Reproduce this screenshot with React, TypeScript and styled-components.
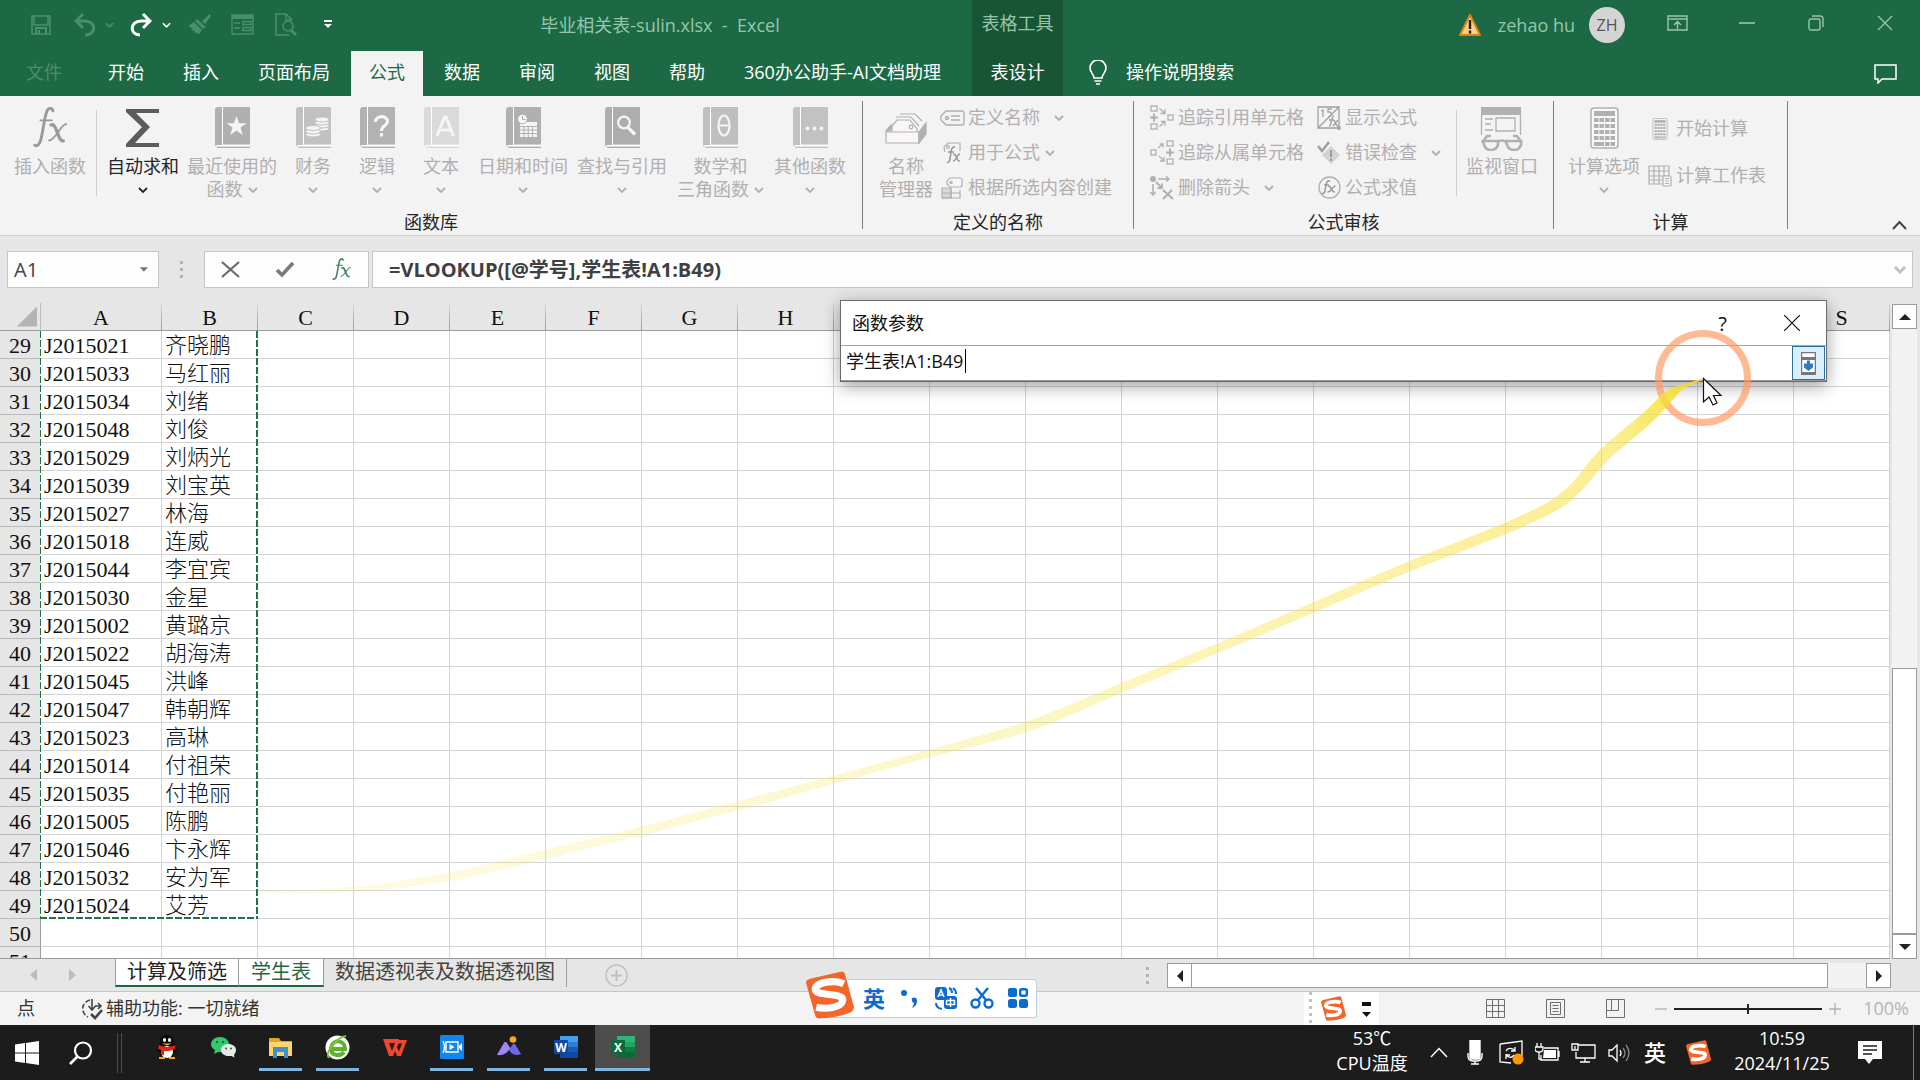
import React from 'react';
import styled, { createGlobalStyle, css } from 'styled-components';

const UI = '"Open Sans", "Noto Sans CJK SC", sans-serif';
const SONG = '"Liberation Serif", "Noto Sans CJK SC", serif';
const GREEN = '#1d6945';
const DIM = '#b1afaf';

const Global = createGlobalStyle`
  * { box-sizing: border-box; }
  body { margin: 0; background: #e6e6e6; font-family: ${UI}; font-size: 18px; line-height: 23px; color: #262626; overflow: hidden; }
  button, input { font: inherit; color: inherit; background: none; border: 0; padding: 0; margin: 0; outline: 0; border-radius: 0; }
  svg { display: block; flex: none; }
`;

const App_ = styled.div`
  position: relative; display: flex; flex-direction: column; height: 100vh; overflow: hidden;
`;

/* ---------- title bar ---------- */
const TitleBar = styled.header`
  display: flex; height: 51px; background: ${GREEN}; color: #96c6aa; flex: none;
`;
const TitleLeft = styled.div`display: flex; flex: 0 0 972px;`;
const QuickBar = styled.div`display: flex; align-items: center; padding: 0 0 2px 21px; flex: 0 0 348px;`;
const QuickBtn = styled.button<{ $w: number; $gap?: number; $on?: boolean }>`
  display: flex; align-items: center; justify-content: center; width: ${p => p.$w}px; height: 40px; flex: none;
  margin-left: ${p => p.$gap || 0}px; color: ${p => (p.$on ? '#fff' : '#4b8e6a')};
`;
const DocTitle = styled.h1`
  flex: 1; margin: 0; font-size: 18px; font-weight: 400; line-height: 51px; text-align: center; white-space: pre;
`;
const ContextName = styled.div`
  width: 91px; background: #185537; text-align: center; line-height: 47px;
`;
const Account = styled.div`
  display: flex; align-items: center; margin-left: auto; gap: 16px; height: 50px;
`;
const Avatar = styled.span`
  width: 36px; height: 36px; border-radius: 50%; background: #d4d4d4; color: #555; font-size: 16px; line-height: 36px; text-align: center;
  margin-left: -2px;
`;
const WinButtons = styled.div`display: flex; margin-left: 18px; padding-right: 1px;`;
const WinBtn = styled.button`
  width: 69px; height: 46px; display: flex; align-items: center; justify-content: center;
`;

const TabBar = styled.nav`
  display: flex; height: 45px; background: ${GREEN}; color: #fff; flex: none; align-items: stretch;
`;
const TabGroup = styled.div`display: flex; gap: 3px; flex: 0 0 972px;`;
const Tab = styled.button<{ $active?: boolean; $file?: boolean; $context?: boolean }>`
  display: flex; justify-content: center; padding: 0 18px; line-height: 42px; white-space: nowrap; flex: none;
  ${p => p.$active && css`background: #f3f3f3; color: ${GREEN};`}
  ${p => p.$file && css`width: 87px; padding: 0 0 0 26px; justify-content: flex-start; color: #4b8e6a;`}
  ${p => p.$context && css`width: 91px; background: #185537;`}
`;
const TellMe = styled.button`
  display: flex; align-items: center; gap: 18px; margin-left: 25px; height: 43px;
`;
const CommentBtn = styled.button`margin: 0 23px 0 auto;`;

/* ---------- ribbon ---------- */
const Ribbon = styled.section`
  display: flex; height: 140px; background: #f3f3f3; border-bottom: 1px solid #cfcfcf; flex: none;
`;
const Group = styled.div<{ $w: number }>`
  display: flex; flex-direction: column; flex: 0 0 ${p => p.$w}px; position: relative;
`;
const GroupBody = styled.div<{ $pad: number; $gap?: number }>`
  display: flex; height: 114px; padding-left: ${p => p.$pad}px; gap: ${p => p.$gap || 0}px; align-items: flex-start;
`;
const GroupName = styled.div`text-align: center; line-height: 24px; color: #262626;`;
const Divider = styled.div`width: 1px; margin: 5px 0 6px; background: #7d7d7d; flex: none;`;
const InnerDivider = styled.div<{ $gap?: number }>`
  width: 1px; height: 86px; margin: 14px ${p => p.$gap || 0}px 0; background: #cfcfcf;
`;
const BigBtn = styled.button<{ $on?: boolean; $pad?: number }>`
  display: flex; flex-direction: column; align-items: center; min-width: 64px; padding: 11px ${p => p.$pad || 4}px 0;
  color: ${p => (p.$on ? '#262626' : DIM)}; white-space: nowrap; flex: none;
`;
const BigIcon = styled.span`display: flex; height: 42px; margin-bottom: 6px; justify-content: center;`;
const Line = styled.span`display: flex; align-items: center; height: 23px; gap: 5px;`;
const SmallCol = styled.div<{ $w: number; $top: number }>`
  display: flex; flex-direction: column; width: ${p => p.$w}px; padding-top: ${p => p.$top}px; flex: none;
`;
const SmallBtn = styled.button<{ $h: number; $gap?: number }>`
  display: flex; align-items: center; height: ${p => p.$h}px; color: ${DIM}; white-space: nowrap;
  & > span { margin: 0 ${p => p.$gap || 0}px 0 4px; }
`;
const SmallIcon = styled.i`display: flex; width: 24px; justify-content: center; flex: none;`;
const Collapse = styled.button`margin: auto 13px 5px auto; color: #444;`;

/* ---------- formula bar ---------- */
const FormulaBar = styled.section`
  display: flex; height: 67px; padding: 15px 7px 0; align-items: flex-start; background: #e6e6e6; flex: none;
`;
const NameBox = styled.label`
  display: flex; align-items: center; width: 152px; height: 37px; padding: 0 10px 0 6px; background: #fdfdfd; border: 1px solid #c6c6c6; color: #444;
  font-size: 20px;
  input { width: 100%; flex: 1; }
  svg { color: #777; }
`;
const Dots = styled.span`
  display: flex; flex-direction: column; gap: 4px;
  &::before, &::after { content: ''; }
  i, &::before, &::after { width: 3px; height: 3px; background: #b2b2b2; }
`;
const DotsSlot = styled.div`display: flex; width: 45px; height: 37px; align-items: center; justify-content: center;`;
const FormulaTools = styled.div`
  display: flex; width: 165px; height: 37px; background: #fdfdfd; border: 1px solid #c6c6c6; justify-content: center; gap: 35px; align-items: center; margin-right: 3px;
`;
const FormulaField = styled.label`
  display: flex; flex: 1; align-items: center; height: 37px; padding: 0 6px 0 16px; background: #fdfdfd; border: 1px solid #c6c6c6; color: #404040;
  input { flex: 1; font-size: 20px; font-weight: 700; }
`;

/* ---------- sheet ---------- */
const SheetArea = styled.main`display: flex; flex: 1; min-height: 0; background: #e6e6e6;`;
const GridView = styled.div`position: relative; flex: 1; overflow: hidden; border-bottom: 1px solid #9b9b9b;`;
const Grid = styled.table`
  width: 1890px; table-layout: fixed; border-collapse: separate; border-spacing: 0; background: #fff;
  font-family: ${SONG}; font-size: 22px; line-height: 24px; color: #111;
  th { font-weight: 400; background: #e6e6e6; padding: 3px 0 0; height: 28px; }
  thead th { border-bottom: 1px solid #9b9b9b; border-right: 1px solid; border-image: linear-gradient(#dadada, #9b9b9b) 1; }
  thead th:first-child { border-image: none; border-color: #9b9b9b; border-right-color: #bdbdbd; padding: 0; }
  tbody th { border-right: 1px solid #9b9b9b; border-bottom: 1px solid #b9b9b9; }
  td { padding: 3px 0 0 3px; height: 28px; border-right: 1px solid #d4d4d4; border-bottom: 1px solid #d4d4d4; white-space: nowrap; overflow: hidden; font-weight: 300; }
`;
const Corner = styled.span`
  display: block; width: 20px; height: 20px; margin: 3px 3px 3px auto; background: #b4b4b4; clip-path: polygon(100% 0, 100% 100%, 0 100%);
`;
const Ants = styled.div`
  position: absolute; left: 40px; top: 28px; width: 218px; height: 588px; pointer-events: none;
  background:
    repeating-linear-gradient(180deg, #217346 0 7px, #fff 7px 9px) 0 0 / 1px 100% no-repeat,
    repeating-linear-gradient(180deg, #217346 0 7px, #fff 7px 9px) 100% 0 / 2px 100% no-repeat,
    repeating-linear-gradient(90deg, #217346 0 7px, #fff 7px 9px) 0 100% / 100% 2px no-repeat;
`;
const VScroll = styled.div`
  display: flex; flex-direction: column; width: 30px; padding: 1px 3px 0 2px; flex: none;
`;
const VTrack = styled.div`display: flex; flex: 1; flex-direction: column; justify-content: flex-end; background: #f2f2f2;`;
const VThumb = styled.div`height: 44%; background: #fff; border: 1px solid #9b9b9b;`;
const ScrollBtn = styled.button`
  width: 25px; height: 25px; display: flex; align-items: center; justify-content: center; background: #fff; border: 1px solid #9b9b9b; color: #222; flex: none;
`;

const SheetBar = styled.section`
  display: flex; height: 33px; background: #e6e6e6; border-bottom: 1px solid #c6c6c6; flex: none; align-items: flex-start;
`;
const SheetNav = styled.div`display: flex; align-items: center; gap: 26px; height: 32px; width: 115px; padding-left: 28px; color: #bcbcbc;`;
const SheetTab = styled.button<{ $kind: 'near' | 'active' | 'plain' }>`
  font-size: 20px; line-height: 24px; height: 28px; padding: 0 11px 2px; white-space: nowrap; color: #444;
  ${p => p.$kind !== 'plain' && css`background: #fff; border-bottom: 2px solid ${GREEN}; border-right: 1px solid #9b9b9b; color: #222; padding-bottom: 0;`}
  ${p => p.$kind === 'near' && css`border-left: 1px solid #9b9b9b;`}
  ${p => p.$kind === 'active' && css`color: ${GREEN}; padding: 0 12px;`}
  ${p => p.$kind === 'plain' && css`border-right: 1px solid #9b9b9b;`}
`;
const AddSheet = styled.button`margin: 5px 0 0 38px; color: #c0c0c0;`;
const HScroll = styled.div`
  display: flex; align-items: center; flex: 0 0 774px; margin: 4px 0 0 auto;
`;
const HDots = styled.div`width: 21px; display: flex;`;
const HTrack = styled.div`flex: 1; height: 25px; background: #f2f2f2; margin-left: -1px;`;
const HThumb = styled.div`width: calc(100% - 38px); height: 25px; background: #fff; border: 1px solid #9b9b9b;`;
const HPad = styled.div`width: 29px;`;

/* ---------- status bar ---------- */
const StatusBar = styled.footer`
  display: flex; align-items: center; height: 33px; background: #f3f3f3; color: #333; padding: 0 11px 0 17px; flex: none;
`;
const Access = styled.button`display: flex; align-items: center; gap: 3px; margin-left: 47px;`;
const LangBar = styled.div`
  display: flex; align-items: center; width: 75px; height: 33px; margin-left: auto; background: #fff; padding-left: 5px; 
  svg + svg { margin-left: 16px; }
`;
const LangGrip = styled.span`width: 3px; height: 33px; margin-right: 9px; background: repeating-linear-gradient(#c2c2c2 0 3px, #fff 3px 7px);`;
const Views = styled.div`display: flex; width: 139px; justify-content: space-between; align-items: center; margin: 0 0 0 107px; color: #6e6e6e;`;
const ZoomBox = styled.div`display: flex; align-items: center; gap: 7px; margin-left: 30px; color: #b3b3b3;`;
const ZoomRange = styled.input`
  appearance: none; width: 148px; height: 12px; background: linear-gradient(#222, #222) 0 5px / 100% 2px no-repeat;
  &::-webkit-slider-thumb { appearance: none; width: 2px; height: 10px; background: #222; }
`;
const ZoomText = styled.span`width: 50px; margin-left: 11px; text-align: right; white-space: nowrap;`;

/* ---------- task bar ---------- */
const TaskBar = styled.footer`
  display: flex; height: 55px; background: #1d1c1c; color: #fff; flex: none; align-items: stretch;
`;
const TaskLead = styled.div`display: flex; width: 138px; align-items: center; padding-left: 15px; gap: 30px;`;
const TaskRule = styled.span`width: 5px; height: 40px; border: solid #4c4b4b; border-width: 0 1px; margin-left: -6px;`;
const TaskItem = styled.button<{ $open?: boolean; $active?: boolean }>`
  display: flex; justify-content: center; width: 55px; height: 46px; margin: 0 1px; padding-top: 10px; position: relative;
  background: ${p => (p.$active ? '#4f4d4c' : 'none')};
  &::after {
    content: ''; position: absolute; bottom: 0; height: 3px; left: ${p => (p.$active ? 0 : 6)}px; right: ${p => (p.$active ? 0 : 6)}px;
    background: ${p => (p.$open ? '#7fb4de' : 'none')};
  }
`;
const Tray = styled.div`display: flex; margin-left: auto; align-items: stretch;`;
const TwoLines = styled.div<{ $w: number }>`
  width: ${p => p.$w}px; text-align: center; line-height: 25px; padding-top: 1px; white-space: nowrap;
`;
const TrayBtn = styled.button<{ $w?: number }>`
  width: ${p => p.$w || 36}px; display: flex; align-items: center; justify-content: center; font-size: 22px; font-weight: 500;
`;
const TrayIcons = styled.div`display: flex; margin: 0 6px 0 12px;`;
const DesktopEdge = styled.span`border-left: 1px solid #7a7a7a; width: 7px; margin-left: 9px;`;

/* ---------- floating parts ---------- */
const Dialog = styled.section`
  position: absolute; left: 840px; top: 300px; width: 987px; height: 82px; background: #fff; border: 1px solid #6b6b6b;
  box-shadow: 0 4px 16px rgba(0,0,0,.38); display: flex; flex-direction: column; color: #111;
`;
const DialogHead = styled.div`display: flex; height: 44px; align-items: center; padding: 0 26px 0 11px;`;
const DialogTitle = styled.h2`flex: 1; margin: 0; font-size: 18px; font-weight: 400; line-height: 23px;`;
const DialogBtn = styled.button<{ $gap?: number }>`margin-right: ${p => p.$gap || 0}px; font-size: 20px;`;
const DialogRow = styled.label`
  display: flex; flex: 1; border-top: 1px solid #a5a5a5; border-bottom: 1px solid #999;
`;
const Entry = styled.span`
  position: relative; flex: 1; display: flex;
  input { width: 100%; height: 30px; padding-left: 5px; line-height: 30px; }
`;
const Caret = styled.i`position: absolute; left: 124px; top: 3px; width: 1px; height: 24px; background: #000;`;
const RangeBtn = styled.button`
  width: 33px; height: 34px; background: #d9effb; border: 1px solid #2a6f9e; display: flex; align-items: center; justify-content: center; margin-right: 1px; flex: none;
`;
const ImeBar = styled.div`
  position: absolute; left: 806px; bottom: 62px; display: flex; align-items: center; height: 46px;
`;
const ImeLogo = styled.span`position: relative; z-index: 1; display: flex;`;
const ImePanel = styled.div`
  display: flex; align-items: center; height: 39px; margin: 6px 0 0 -24px; padding: 0 0 0 25px; background: #fff; border: 1px solid #b9cfdd; border-radius: 3px;
  color: #0b6bd0;
`;
const ImeBtn = styled.button`
  width: 36px; display: flex; justify-content: center; font-size: 22px; font-weight: 700;
`;
const Ink = styled.svg`position: absolute; left: 0; top: 0; pointer-events: none;`;

/* ---------- drawings ---------- */
const Chev = ({ w = 10 }: { w?: number }) => (
  <svg width={w} height="8" viewBox="0 0 10 8" fill="none" stroke="currentColor" strokeWidth="1.8"><path d="M1 2l4 4 4-4" /></svg>
);
const Tri = ({ d, s = 12 }: { d: string; s?: number }) => (
  <svg width={s} height={s} viewBox="0 0 12 12" fill="currentColor"><path d={d} /></svg>
);
const Fx = ({ size, color }: { size: number; color: string }) => (
  <svg width={size} height={size} viewBox="0 0 40 44" fill="none" stroke={color} strokeLinecap="round">
    <path d="M23 4c-1-4-5-3-6.500 1-2.500 7-4 21-6 29-1.200 5-4 8-6.500 6" strokeWidth="3" />
    <path d="M10 14h12" strokeWidth="2" />
    <path d="M21 19c6-4 7 18 13 16.500" strokeWidth="3.400" />
    <path d="M37 18c-5-1-12 18-18 17" strokeWidth="2" />
  </svg>
);
const Book = ({ tone, children }: { tone: string; children?: React.ReactNode }) => (
  <svg width="35" height="41" viewBox="0 0 35 41">
    <path d="M3 0h4v38H2.500Q0 38 0 40V3Q0 0 3 0z" fill={tone} />
    <rect x="8" width="27" height="37.500" fill={tone} />
    <path d="M2 40.200h33" stroke={tone} strokeWidth="1.400" /><path d="M2 38.600h33" stroke="#fff" strokeWidth="1.400" />
    <path d="M7.500 0v37.500" stroke="#fff" />
    {children}
  </svg>
);
const TagShape = 'M6 1h16q2 0 2 2v10q0 2-2 2H6L1 10V6z';
const TraceCells = ({ flip }: { flip?: boolean }) => (
  <svg width="24" height="25" viewBox="0 0 24 25" fill="none" stroke={DIM} strokeWidth="1.300">
    {flip ? (
      <><rect x="1" y="10" width="5" height="5" /><rect x="17" y="1" width="6" height="5" /><rect x="17" y="19" width="6" height="5" />
        <path d="M20 8.500v8M16 12.500h8" strokeWidth="2" /><path d="M8 8l5-4M9.500 4H13v3.500M9 16l4.500 4.500M10 21h4v-4" /></>
    ) : (
      <><rect x="1" y="1" width="6" height="5" /><rect x="1" y="19" width="6" height="5" /><rect x="18" y="10" width="5" height="5" />
        <path d="M4 8.500v8M0 12.500h8" strokeWidth="2" /><path d="M9.500 3.500l5 4.500M15 4v4.500h-4.500M9.500 21.500l5-5M11 16.500h4V21" /></>
    )}
  </svg>
);
const CalcIcon = ({ w, h }: { w: number; h: number }) => (
  <svg width={w} height={h} viewBox="0 0 29 42">
    <rect x="1" y="1" width="27" height="40" rx="3" fill="#f8f8f8" stroke={DIM} strokeWidth="1.500" />
    <rect x="4" y="4" width="21" height="5" fill={DIM} />
    {[11, 17, 23, 29, 35].map((y, r) => [4, 9.5, 15, 20.5].map((x, c) =>
      r === 4 && c === 0 ? <rect key={c} x={4} y={y} width="10" height="4" fill={DIM} /> : r === 4 && c === 1 ? null :
        <rect key={c} x={x} y={y} width="4.500" height="4" fill={DIM} />))}
  </svg>
);
const Sogou = ({ size }: { size: number }) => (
  <svg width={size} height={size} viewBox="0 0 47 46">
    <path d="M4 7L35 0q2 0 3 2l9 33q0 3-3 5-14 6-32 6-2 0-3-3L0 11q0-3 4-4z" fill="#f4652a" />
    <path d="M37 12c-8-4-27-2-28 5-1 8 28 3 27 11-1 8-17 9-26 7" fill="none" stroke="#fff" strokeWidth="7" />
  </svg>
);
const Office = ({ l, a, b, c, d }: { l: string; a: string; b: string; c: string; d: string }) => (
  <svg width="26" height="24" viewBox="0 0 26 24">
    <rect x="7" y="1" width="18" height="22" rx="1" fill={b} /><rect x="7" y="1" width="18" height="6" fill={a} />
    <rect x="7" y="12" width="18" height="6" fill={c} /><rect x="7" y="17" width="18" height="6" fill={d} />
    <rect x="1" y="5" width="14" height="14" rx="1" fill={d} />
    <text x="8" y="16.500" fontSize="12" fontWeight="700" fill="#fff" textAnchor="middle" fontFamily="Open Sans, sans-serif">{l}</text>
  </svg>
);

/* Pointer trail: a ribbon polygon that widens and darkens toward the pointer. */
const trailPts: [number, number, number][] = [
  [262, 892, 2], [355, 889, 5], [453, 876, 9], [551, 853, 9], [649, 829, 9], [741, 805, 9], [833, 780, 8], [931, 753, 8], [1029, 726, 10],
  [1126, 686, 9], [1218, 648, 9], [1310, 609, 10], [1408, 567, 10], [1518, 523, 11], [1567, 496, 12], [1604, 455, 13], [1647, 418, 13], [1670, 395, 11], [1682, 387, 4], [1703, 379, 1],
];
const smooth = (pts: [number, number][]) => pts.map((p, i) => {
  if (i === 0) return `${p[0]} ${p[1]}`;
  const a = pts[i - 1], z = pts[Math.max(0, i - 2)], n = pts[Math.min(pts.length - 1, i + 1)];
  return `C${a[0] + (p[0] - z[0]) / 6} ${a[1] + (p[1] - z[1]) / 6} ${p[0] - (n[0] - a[0]) / 6} ${p[1] - (n[1] - a[1]) / 6} ${p[0]} ${p[1]}`;
}).join(' ');
const edge = (side: number): [number, number][] => trailPts.map((p, i) => {
  const a = trailPts[Math.max(0, i - 1)], b = trailPts[Math.min(trailPts.length - 1, i + 1)];
  const dx = b[0] - a[0], dy = b[1] - a[1], l = Math.hypot(dx, dy);
  return [p[0] - (dy / l) * side * p[2] / 2, p[1] + (dx / l) * side * p[2] / 2];
});
const trail = `M${smooth(edge(1))} L${smooth(edge(-1).reverse())}Z`;

const names = ['齐晓鹏', '马红丽', '刘绪', '刘俊', '刘炳光', '刘宝英', '林海', '连威', '李宜宾', '金星', '黄璐京', '胡海涛', '洪峰', '韩朝辉', '高琳', '付祖荣', '付艳丽', '陈鹏', '卞永辉', '安为军', '艾芳'];
const ids = ['021', '033', '034', '048', '029', '039', '027', '018', '044', '030', '002', '022', '045', '047', '023', '014', '035', '005', '046', '032', '024'];
const letters = 'ABCDEFGHIJKLMNOPQRS'.split('');

const white = '#f6f5f6';
const books: { t: string; t2?: string; tone: string; pad?: number; g: React.ReactNode }[] = [
  { t: '最近使用的', t2: '函数', tone: '#b1afb1', g: <path d="M21.500 9l2.600 7.200h7.400l-6 4.400 2.300 7.400-6.300-4.600-6.300 4.600 2.300-7.400-6-4.400h7.400z" fill={white} /> },
  { t: '财务', tone: '#c2c0c2', g: <g fill={white} stroke="#c2c0c2"><ellipse cx="26" cy="21.500" rx="7" ry="2.500" /><ellipse cx="26" cy="18.500" rx="7" ry="2.500" /><ellipse cx="26" cy="15.500" rx="7" ry="2.500" /><ellipse cx="26" cy="12.500" rx="7" ry="2.500" /><ellipse cx="17" cy="27.500" rx="7.500" ry="2.500" /><ellipse cx="17" cy="24.500" rx="7.500" ry="2.500" /><ellipse cx="17" cy="21" rx="7.500" ry="2.500" /></g> },
  { t: '逻辑', tone: '#b3b1b3', g: <g fill="none" stroke={white} strokeWidth="3.200"><path d="M15.500 15c0-7 12-7 12-.5 0 4-6 4-6 9.500" /><path d="M21.500 26v3.500" /></g> },
  { t: '文本', tone: '#dbd9db', g: <path d="M13 29l7.500-19h1.500L29.500 29M16 23h10.500" fill="none" stroke={white} strokeWidth="3" /> },
  { t: '日期和时间', tone: '#b1afb1', pad: 5, g: <g><rect x="14" y="15" width="17" height="15" fill={white} /><path d="M14 19.500h17M14 23h17M14 26.500h17M18 19v11M22.200 19v11M26.500 19v11" stroke="#b1afb1" /><circle cx="16.500" cy="12" r="4.800" fill={white} stroke="#b1afb1" /><path d="M16.500 9v3.500h3" fill="none" stroke="#b1afb1" /></g> },
  { t: '查找与引用', tone: '#aeacae', g: <g fill="none" stroke={white}><circle cx="19" cy="15.500" r="5.800" strokeWidth="2.200" /><path d="M23 20.500l7 7" strokeWidth="3.200" /></g> },
  { t: '数学和', t2: '三角函数', tone: '#c0bec0', pad: 6, g: <g fill="none" stroke={white}><ellipse cx="21" cy="18.500" rx="5.500" ry="10" strokeWidth="2.200" /><path d="M16 18.500h10" strokeWidth="2" /></g> },
  { t: '其他函数', tone: '#c3c1c3', g: <g fill={white}><circle cx="14.500" cy="21.500" r="1.900" /><circle cx="21.500" cy="21.500" r="1.900" /><circle cx="28.500" cy="21.500" r="1.900" /></g> },
];

const Quick = () => (
  <QuickBar>
    <QuickBtn $w={40} aria-label="保存"><svg width="20" height="20" viewBox="0 0 20 20" fill="none" stroke="currentColor" strokeWidth="1.600"><path d="M1 1h18v18H1z" /><path d="M3 1v9h14V1" /><path d="M5 19v-6h10v6M8 19v-4" strokeWidth="2" /></svg></QuickBtn>
    <QuickBtn $w={30} $gap={9} aria-label="撤消"><svg width="22" height="24" viewBox="0 0 22 24" fill="none" stroke="currentColor" strokeWidth="3"><path d="M9 1L2 8l7 7M2 8h9c11 0 12 14 0 14" /></svg></QuickBtn>
    <QuickBtn $w={10} $gap={4} aria-label="撤消列表"><Chev w={9} /></QuickBtn>
    <QuickBtn $w={30} $gap={12} $on aria-label="重做"><svg width="22" height="24" viewBox="0 0 22 24" fill="none" stroke="currentColor" strokeWidth="3"><path d="M13 1l7 7-7 7M20 8h-9C0 8-1 22 10 22" /></svg></QuickBtn>
    <QuickBtn $w={10} $gap={5} $on aria-label="重做列表"><Chev w={9} /></QuickBtn>
    <QuickBtn $w={30} $gap={13} aria-label="格式刷"><svg width="23" height="21" viewBox="0 0 23 21" fill="currentColor"><path d="M22 0l1 2-6 8-3-3zM9 5l9 8-3 2-8-8zM6 8l8 8-4 5-1-3-2 2-1-4-2 1-1-4-3-1z" /></svg></QuickBtn>
    <QuickBtn $w={30} $gap={13} aria-label="窗体"><svg width="23" height="21" viewBox="0 0 23 21" fill="none" stroke="currentColor" strokeWidth="1.400"><path d="M1 1h21v19H1z" /><path d="M1 3h21" strokeWidth="4" /><path d="M3 9h6M3 14h6M12 7.500h8v3h-8zM12 13.500h8v3h-8z" /></svg></QuickBtn>
    <QuickBtn $w={30} $gap={14} aria-label="打印预览"><svg width="22" height="23" viewBox="0 0 22 23" fill="none" stroke="currentColor" strokeWidth="1.500"><path d="M14 22H1V1h10l6 6M11 1v6h6" /><circle cx="13" cy="13" r="5" /><path d="M16 17l5 5" strokeWidth="2.600" /></svg></QuickBtn>
    <QuickBtn $w={20} $gap={17} $on aria-label="自定义"><svg width="8" height="9" viewBox="0 0 8 9" fill="currentColor"><path d="M0 0h8v2H0zM0 4h8L4 8z" /></svg></QuickBtn>
  </QuickBar>
);

export default function App() {
  return (
    <App_>
      <Global />
      <TitleBar>
        <TitleLeft>
          <Quick />
          <DocTitle>毕业相关表-sulin.xlsx  -  Excel</DocTitle>
        </TitleLeft>
        <ContextName>表格工具</ContextName>
        <Account>
          <svg width="24" height="24" viewBox="0 0 24 24"><path d="M12 2l10 20H2z" fill="#fbd08a" stroke="#d98417" strokeWidth="2" strokeLinejoin="round" /><path d="M12 7v9M12 17.500v3" stroke="#222" strokeWidth="2.400" /></svg>
          <span>zehao hu</span>
          <Avatar>ZH</Avatar>
        </Account>
        <WinButtons>
          <WinBtn aria-label="功能区显示选项"><svg width="21" height="16" viewBox="0 0 21 16" fill="none" stroke="currentColor" strokeWidth="1.400"><path d="M1 1h19v14H1zM1 4h19M10.500 14V6.500M7 10l3.500-3.500L14 10" /></svg></WinBtn>
          <WinBtn aria-label="最小化"><svg width="16" height="2"><path d="M0 1h16" stroke="currentColor" strokeWidth="1.600" /></svg></WinBtn>
          <WinBtn aria-label="还原"><svg width="16" height="16" viewBox="0 0 16 16" fill="none" stroke="currentColor" strokeWidth="1.400"><rect x="1" y="4" width="11" height="11" rx="2" /><path d="M4 1h8q3 0 3 3v8" /></svg></WinBtn>
          <WinBtn aria-label="关闭"><svg width="16" height="16" viewBox="0 0 16 16" stroke="currentColor" strokeWidth="1.400"><path d="M1 1l14 14M15 1L1 15" /></svg></WinBtn>
        </WinButtons>
      </TitleBar>
      <TabBar>
        <TabGroup>
          <Tab $file>文件</Tab><Tab>开始</Tab><Tab>插入</Tab><Tab>页面布局</Tab><Tab $active>公式</Tab><Tab>数据</Tab><Tab>审阅</Tab><Tab>视图</Tab><Tab>帮助</Tab><Tab>360办公助手-AI文档助理</Tab>
        </TabGroup>
        <Tab $context>表设计</Tab>
        <TellMe>
          <svg width="20" height="25" viewBox="0 0 20 25" fill="none" stroke="currentColor" strokeWidth="1.600"><path d="M6 18c0-4-4-5-4-10a8 8 0 0 1 16 0c0 5-4 6-4 10zM6.500 21h7M8 24h4" /></svg>
          操作说明搜索
        </TellMe>
        <CommentBtn aria-label="批注"><svg width="23" height="20" viewBox="0 0 23 20" fill="none" stroke="currentColor" strokeWidth="1.500"><path d="M1 1h21v14H8l-4 4v-4H1z" /></svg></CommentBtn>
      </TabBar>

      <Ribbon>
        <Group $w={862}>
          <GroupBody $pad={10}>
            <BigBtn><BigIcon><Fx size={42} color="#9a9898" /></BigIcon><Line>插入函数</Line></BigBtn>
            <InnerDivider $gap={6} />
            <BigBtn $on><BigIcon><svg width="34" height="40" viewBox="0 0 34 40"><path d="M0 2h33v4H10l14 14L9 36h24v4H0v-3l16-17L0 5z" fill="#5c5a5a" /></svg></BigIcon><Line>自动求和</Line><Line><Chev /></Line></BigBtn>
            {books.map(b => (
              <BigBtn key={b.t} $pad={b.pad}>
                <BigIcon><Book tone={b.tone}>{b.g}</Book></BigIcon>
                <Line>{b.t}</Line><Line>{b.t2}<Chev /></Line>
              </BigBtn>
            ))}
          </GroupBody>
          <GroupName>函数库</GroupName>
        </Group>
        <Divider />
        <Group $w={270}>
          <GroupBody $pad={11} $gap={2}>
            <BigBtn>
              <BigIcon><svg width="42" height="42" viewBox="0 0 42 42" fill="#f8f6f8" stroke={DIM} strokeWidth="1.200"><path d="M15 7h15l7 7M11 10h15l8 9M7 24v-5l5-6h13l7 9v4" /><path d="M1 25h33v11H1z" /><path d="M34 25l7-9v11l-7 9z" fill={DIM} /><path d="M1 24l5-6v6z" fill={DIM} /><circle cx="26" cy="20" r="1.800" /></svg></BigIcon>
              <Line>名称</Line><Line>管理器</Line>
            </BigBtn>
            <SmallCol $w={180} $top={4}>
              <SmallBtn $h={35} $gap={14}><SmallIcon><svg width="25" height="16" viewBox="0 0 25 16" fill="none" stroke={DIM} strokeWidth="1.400"><path d={TagShape} /><circle cx="7" cy="8" r="1.500" /><path d="M11 6h9M11 10h9" /></svg></SmallIcon><span>定义名称</span><Chev /></SmallBtn>
              <SmallBtn $h={35} $gap={5}><SmallIcon><svg width="18" height="22" viewBox="0 0 18 22" fill="none" stroke={DIM} strokeWidth="1.200"><path d="M2 10L1 5l4-4h12v8" /><circle cx="5" cy="5" r="1.300" /><path d="M12 5c-4-1-4 5-5 12-.5 3-2 4-3 3M5 10h6" stroke="#9a9898" strokeWidth="1.600" /><path d="M10 12c4-1 3 8 7 7M17 12c-3 0-4 7-7 7" stroke="#9a9898" strokeWidth="1.500" /></svg></SmallIcon><span>用于公式</span><Chev /></SmallBtn>
              <SmallBtn $h={35}><SmallIcon><svg width="22" height="22" viewBox="0 0 22 22" fill="none" stroke={DIM} strokeWidth="1.200"><path d="M1 11h9v10H1z" fill="#d9d7d9" /><path d="M1 16h18M10 12v9M19 13v8H1" /><path d="M9 1h10q2 0 2 2v5q0 2-2 2H9L6 7V4z" fill="#f6f6f6" /><circle cx="10" cy="5.500" r="1.200" /></svg></SmallIcon><span>根据所选内容创建</span></SmallBtn>
            </SmallCol>
          </GroupBody>
          <GroupName>定义的名称</GroupName>
        </Group>
        <Divider />
        <Group $w={419}>
          <GroupBody $pad={16}>
            <SmallCol $w={167} $top={4}>
              <SmallBtn $h={35}><SmallIcon><TraceCells /></SmallIcon><span>追踪引用单元格</span></SmallBtn>
              <SmallBtn $h={35}><SmallIcon><TraceCells flip /></SmallIcon><span>追踪从属单元格</span></SmallBtn>
              <SmallBtn $h={35} $gap={14}><SmallIcon><svg width="24" height="24" viewBox="0 0 24 24" fill="none" stroke={DIM} strokeWidth="1.500"><circle cx="3" cy="3" r="2.200" fill={DIM} /><path d="M8 3h11M16 .500l3 2.500-3 2.500M3 8v11M.500 16L3 19l2.500-3" /><path d="M6 6l6 6M12 7.500V12H7.500" strokeWidth="1.800" /><path d="M13 14l10 9M22 14l-9 9" strokeWidth="2" /></svg></SmallIcon><span>删除箭头</span><Chev /></SmallBtn>
            </SmallCol>
            <SmallCol $w={139} $top={4}>
              <SmallBtn $h={35}><SmallIcon><svg width="24" height="24" viewBox="0 0 24 24" fill="none" stroke="#a2a0a0" strokeWidth="1.300"><path d="M1 1h21v21H1zM1 22L22 1" /><path d="M4 5l2-1v7M15 3h-4v3c4-1 5 5 0 5M17 10c-3 0-2 10-5 10M12 14h4M16 14c3 0 2 6 5 6M21 14l-5 6" /><path d="M21 21h2v2h-2z" fill={DIM} /></svg></SmallIcon><span>显示公式</span></SmallBtn>
              <SmallBtn $h={35} $gap={14}><SmallIcon><svg width="24" height="24" viewBox="0 0 24 24"><path d="M14 5l9 9-9 9-9-9z" fill="#d4d2d4" /><path d="M14 9v7M14 17.500v2.500" stroke="#999" strokeWidth="2" /><path d="M1 5l4 5 7-9" fill="none" stroke="#a2a0a0" strokeWidth="2.600" /></svg></SmallIcon><span>错误检查</span><Chev /></SmallBtn>
              <SmallBtn $h={35}><SmallIcon><svg width="23" height="23" viewBox="0 0 23 23" fill="none" stroke={DIM} strokeWidth="1.300"><circle cx="11.500" cy="11.500" r="10.500" /><path d="M12 5c-4-1-4 4-5 10-.5 2-1.500 3-3 2M6 9h5" stroke="#999" strokeWidth="1.500" /><path d="M10 10c4-1 3 7 7 6M17.500 10c-3 0-4 6-8 6" stroke="#999" strokeWidth="1.500" /></svg></SmallIcon><span>公式求值</span></SmallBtn>
            </SmallCol>
            <InnerDivider />
            <BigBtn $pad={9}>
              <BigIcon><svg width="44" height="44" viewBox="0 0 44 44" fill="none" stroke={DIM} strokeWidth="1.300"><path d="M1 0h40v8H1z" fill={DIM} stroke="none" /><path d="M1.500 8v20M40.500 8v20M5 12h8M5 17h6M5 23h8M16 11h19v13H16z" /><path d="M2 36l5-7h4M42 36l-5-7h-4M3 34h15v4q-2 5-7 5t-7-5zM26 34h15v4q-2 5-7 5t-7-5zM18 35q4-3 8 0" strokeWidth="2.600" /></svg></BigIcon>
              <Line>监视窗口</Line>
            </BigBtn>
          </GroupBody>
          <GroupName>公式审核</GroupName>
        </Group>
        <Divider />
        <Group $w={233}>
          <GroupBody $pad={10} $gap={4}>
            <BigBtn><BigIcon><CalcIcon w={29} h={42} /></BigIcon><Line>计算选项</Line><Line><Chev /></Line></BigBtn>
            <SmallCol $w={130} $top={9}>
              <SmallBtn $h={47} $gap={4}><SmallIcon><CalcIcon w={16} h={22} /></SmallIcon><span>开始计算</span></SmallBtn>
              <SmallBtn $h={47}><SmallIcon><svg width="24" height="22" viewBox="0 0 24 22" fill="none" stroke={DIM} strokeWidth="1.200"><path d="M1 1h20v11M1 1v18h13M1 6h20M1 11h20M1 15h13M6 1v18M11 1v18M16 1v10" /><rect x="15" y="11" width="8" height="10" rx="1" fill="#f6f6f6" /><path d="M17 13.500h4M17 16h4M17 18.500h4" /></svg></SmallIcon><span>计算工作表</span></SmallBtn>
            </SmallCol>
          </GroupBody>
          <GroupName>计算</GroupName>
        </Group>
        <Divider />
        <Collapse aria-label="折叠功能区"><svg width="15" height="10" viewBox="0 0 15 10" fill="none" stroke="currentColor" strokeWidth="2"><path d="M1 9l6.500-7L14 9" /></svg></Collapse>
      </Ribbon>

      <FormulaBar>
        <NameBox><input aria-label="名称框" defaultValue="A1" size={8} /><Tri s={9} d="M1 3h11L6.500 9z" /></NameBox>
        <DotsSlot><Dots><i /></Dots></DotsSlot>
        <FormulaTools>
          <button aria-label="取消"><svg width="19" height="17" viewBox="0 0 19 17" stroke="#6a6a6a" strokeWidth="2.200"><path d="M1 1l17 15M18 1L1 16" /></svg></button>
          <button aria-label="输入"><svg width="20" height="17" viewBox="0 0 20 17" fill="none" stroke="#7a7a7a" strokeWidth="3.600"><path d="M2 9l5 5L18 2" /></svg></button>
          <button aria-label="插入函数"><Fx size={23} color="#3f8461" /></button>
        </FormulaTools>
        <FormulaField><input aria-label="编辑栏" defaultValue="=VLOOKUP([@学号],学生表!A1:B49)" /><svg width="12" height="9" viewBox="0 0 12 9" fill="none" stroke="#c2c2c2" strokeWidth="3"><path d="M1 2l5 5 5-5" /></svg></FormulaField>
      </FormulaBar>

      <SheetArea>
        <GridView>
          <Grid>
            <colgroup><col style={{ width: 41 }} /><col style={{ width: 121 }} />{letters.slice(1).map(l => <col key={l} style={{ width: 96 }} />)}</colgroup>
            <thead><tr><th aria-label="全选"><Corner /></th>{letters.map(l => <th key={l} scope="col">{l}</th>)}</tr></thead>
            <tbody>
              {Array.from({ length: 23 }, (_, r) => (
                <tr key={r}>
                  <th scope="row">{29 + r}</th>
                  {letters.map((l, c) => <td key={l}>{c === 0 && ids[r] ? 'J2015' + ids[r] : c === 1 ? names[r] : ''}</td>)}
                </tr>
              ))}
            </tbody>
          </Grid>
          <Ants />
        </GridView>
        <VScroll>
          <ScrollBtn aria-label="向上滚动"><Tri d="M0 9h12L6 3z" /></ScrollBtn>
          <VTrack><VThumb /></VTrack>
          <ScrollBtn aria-label="向下滚动"><Tri d="M0 3h12L6 9z" /></ScrollBtn>
        </VScroll>
      </SheetArea>

      <SheetBar>
        <SheetNav><Tri s={12} d="M9 0v12L2 6z" /><Tri s={12} d="M3 0v12l7-6z" /></SheetNav>
        <SheetTab $kind="near">计算及筛选</SheetTab>
        <SheetTab $kind="active">学生表</SheetTab>
        <SheetTab $kind="plain">数据透视表及数据透视图</SheetTab>
        <AddSheet aria-label="新工作表"><svg width="23" height="23" viewBox="0 0 23 23" fill="none" stroke="currentColor" strokeWidth="1.400"><circle cx="11.500" cy="11.500" r="10.500" /><path d="M11.500 6v11M6 11.500h11" strokeWidth="2" /></svg></AddSheet>
        <HScroll>
          <HDots><Dots><i /></Dots></HDots>
          <ScrollBtn aria-label="向左滚动"><Tri d="M9 0v12L3 6z" /></ScrollBtn>
          <HTrack><HThumb /></HTrack>
          <ScrollBtn aria-label="向右滚动"><Tri d="M3 0v12l6-6z" /></ScrollBtn>
          <HPad />
        </HScroll>
      </SheetBar>

      <StatusBar>
        <span>点</span>
        <Access><svg width="21" height="22" viewBox="0 0 21 22" fill="none" stroke="#444" strokeWidth="1.600"><path d="M8 2a9 9 0 0 0-2 17" strokeDasharray="5 2" /><path d="M10 1v10M6.500 8l3.500 4 3.500-4M13 8h6M16 5l3 3-3 3" /><path d="M9 16l4 4 7-8" strokeWidth="2.600" /></svg>辅助功能: 一切就绪</Access>
        <LangBar>
          <LangGrip /><Sogou size={25} />
          <svg width="9" height="18" viewBox="0 0 9 18" fill="#111"><path d="M0 2h9v4H0zM0 12h9l-4.500 5z" /></svg>
        </LangBar>
        <Views>
          <svg width="19" height="19" viewBox="0 0 19 19" fill="none" stroke="currentColor"><path d="M.5.5h18v18H.5zM.5 6.500h18M.5 12.500h18M6.500.5v18M12.500.5v18" /></svg>
          <svg width="19" height="19" viewBox="0 0 19 19" fill="none" stroke="currentColor"><path d="M.5.5h18v18H.5zM4.500 3.500h10v12h-10zM6.500 6.500h6M6.500 9.500h6M6.500 12.500h6" /></svg>
          <svg width="19" height="19" viewBox="0 0 19 19" fill="none" stroke="currentColor"><path d="M.5.5h18v18H.5zM5.500.5v11h7V.5M.5 11.500h5" /></svg>
        </Views>
        <ZoomBox>
          <svg width="12" height="12"><path d="M0 6h12" stroke="currentColor" strokeWidth="1.400" /></svg>
          <ZoomRange type="range" aria-label="显示比例" min={0} max={200} defaultValue={100} />
          <svg width="12" height="12"><path d="M0 6h12M6 0v12" stroke="currentColor" strokeWidth="1.400" /></svg>
          <ZoomText>100%</ZoomText>
        </ZoomBox>
      </StatusBar>

      <TaskBar>
        <TaskLead>
          <button aria-label="开始"><svg width="24" height="24" viewBox="0 0 24 24" fill="#fff"><path d="M0 3.500l10-1.500v9.500H0zM11 2l13-2v11.500H11zM0 12.500h10V22L0 20.500zM11 12.500h13V24l-13-2z" /></svg></button>
          <button aria-label="搜索"><svg width="24" height="24" viewBox="0 0 24 24" fill="none" stroke="#fff" strokeWidth="2.200"><circle cx="14" cy="9.500" r="8" /><path d="M8.500 15.500L1 23" strokeWidth="2.600" /></svg></button>
          <TaskRule />
        </TaskLead>
        <TaskItem aria-label="QQ"><svg width="22" height="24" viewBox="0 0 22 24"><path d="M11 0c5 0 7 3 7 8l3 8-2 1-3 6H6l-3-6-2-1 3-8c0-5 2-8 7-8z" fill="#0a0a0a" /><ellipse cx="11" cy="17" rx="6" ry="6" fill="#fff" /><path d="M3 10q8 4 16 0v4q-8 3-11 2v4H5v-5l-3-1z" fill="#e2231a" /><ellipse cx="8.500" cy="5" rx="1.600" ry="2" fill="#fff" /><ellipse cx="13.500" cy="5" rx="1.600" ry="2" fill="#fff" /><path d="M6 8.500h10l-5 2z" fill="#f9a71b" /><path d="M3 22h6v2H3zM13 22h6v2h-6z" fill="#f9a71b" /></svg></TaskItem>
        <TaskItem aria-label="微信"><svg width="26" height="24" viewBox="0 0 26 24"><path d="M9 2c5 0 9 3 9 7.500S14 17 9 17H7l-4 2 1-4c-2-1-4-3-4-5.500C0 5 4 2 9 2z" fill="#35c86e" /><path d="M17.500 9c4 0 7.500 2.500 7.500 6 0 2-1 4-2 4.500l.5 3-3-1.500h-3c-4 0-7.500-2.500-7.500-6s3.500-6 7.500-6z" fill="#e9e9e9" /><g fill="#14733a"><circle cx="6" cy="7" r="1.200" /><circle cx="12" cy="7" r="1.200" /><circle cx="15" cy="13.500" r="1" /><circle cx="20" cy="13.500" r="1" /></g></svg></TaskItem>
        <TaskItem $open aria-label="文件资源管理器"><svg width="23" height="24" viewBox="0 0 23 24"><path d="M0 3h10l2 3h11v15H0z" fill="#e6a520" /><path d="M0 7h23v14H0z" fill="#fbd56c" /><path d="M4 12h15v11h-4v-6H8v6H4z" fill="#3c92d0" /></svg></TaskItem>
        <TaskItem $open aria-label="360浏览器"><svg width="25" height="25" viewBox="0 0 25 25"><circle cx="12.500" cy="12.500" r="12" fill="#fff" /><path d="M8 14h12c0-10-13-10-14-1-.5 8 9 9 13 4" fill="none" stroke="#5fb02c" strokeWidth="4" /><path d="M4 23C-1 17 13 2 21 1" fill="none" stroke="#7cc23c" strokeWidth="1.800" /></svg></TaskItem>
        <TaskItem aria-label="WPS"><svg width="24" height="24" viewBox="0 0 24 24"><path d="M0 4h16l-1 4H6l3 8 4-11h11l-6 16h-4l-2-5-2 5H6z" fill="#f2452f" /><path d="M15.500 8.500h3.500l-3 8-2-4z" fill="#1d1c1c" /></svg></TaskItem>
        <TaskItem $open aria-label="录屏"><svg width="24" height="24" viewBox="0 0 24 24" fill="none"><rect width="24" height="24" rx="1.500" fill="#0f86f0" /><path d="M3 6q3 6 0 12M6 7h12v10H6z" stroke="#fff" strokeWidth="1.400" /><path d="M9.500 9l5 3-5 3zM19 11l3-3v8l-3-3z" fill="#fff" /></svg></TaskItem>
        <TaskItem $open aria-label="图片"><svg width="24" height="24" viewBox="0 0 24 24"><path d="M0 20L7 8q1-2 3 0l3 5 3-4q1-1 2 0l6 10q-8 3-12-4-3 6-12 5z" fill="#6a67e8" /><path d="M0 20L7 8q1-2 3 0l3 5q-5 8-13 7z" fill="#a086f0" /><circle cx="16" cy="4.500" r="3.300" fill="#f9a81a" /></svg></TaskItem>
        <TaskItem $open aria-label="Word"><Office l="W" a="#41a0ee" b="#2b7cd3" c="#185abd" d="#1049a0" /></TaskItem>
        <TaskItem $open $active aria-label="Excel"><Office l="X" a="#2fb57a" b="#21a366" c="#107c41" d="#0b6a38" /></TaskItem>
        <Tray>
          <TwoLines $w={74}>53℃<br />CPU温度</TwoLines>
          <TrayIcons>
            <TrayBtn aria-label="显示隐藏的图标"><svg width="18" height="11" viewBox="0 0 18 11" fill="none" stroke="#fff" strokeWidth="1.500"><path d="M1 10l8-8.500L17 10" /></svg></TrayBtn>
            <TrayBtn aria-label="麦克风"><svg width="16" height="25" viewBox="0 0 16 25" fill="none" stroke="#fff" strokeWidth="1.400"><rect x="3" y="0" width="10" height="19" rx="1" fill="#fff" /><path d="M1 13v3q0 5 5 5h4q5 0 5-5v-3M8 21v3M4 24h8" /></svg></TrayBtn>
            <TrayBtn aria-label="更新"><svg width="25" height="25" viewBox="0 0 25 25" fill="none" stroke="#fff" strokeWidth="1.300"><path d="M1 4l22-3v15M1 4v18l11 1" /><path d="M7 11q2-4 7-2l2 2M16 7v4h-4M15 15q-3 4-7 1l-1-2M7 19v-4h4" /><circle cx="19" cy="19" r="5.500" fill="#ff9800" stroke="none" /></svg></TrayBtn>
            <TrayBtn aria-label="电池"><svg width="25" height="19" viewBox="0 0 25 19" fill="none" stroke="#fff" strokeWidth="1.300"><path d="M2 0v4M6 0v4M0 4h8v2q0 3-4 3t-4-3zM4 9v7h2M9 5h14v12H6v-5M24 8v6" /><path d="M9 7h12v8H8z" fill="#fff" stroke="none" /></svg></TrayBtn>
            <TrayBtn aria-label="网络"><svg width="25" height="20" viewBox="0 0 25 20" fill="none" stroke="#fff" strokeWidth="1.300"><path d="M7 2h17v13H5V9M1 1h6v6H1zM4 3v3M14 15v4M9 19h10" /></svg></TrayBtn>
            <TrayBtn aria-label="音量"><svg width="23" height="20" viewBox="0 0 23 20" fill="none" stroke="#fff" strokeWidth="1.300"><path d="M1 7h3l5-5v16l-5-5H1zM12 7q2 3 0 6" /><path d="M15 5q4 5 0 10M18 2q6 8 0 16" stroke="#888" /></svg></TrayBtn>
            <TrayBtn aria-label="输入法语言">英</TrayBtn>
            <TrayBtn $w={50} aria-label="搜狗输入法"><Sogou size={25} /></TrayBtn>
          </TrayIcons>
          <TwoLines $w={106}>10:59<br />2024/11/25</TwoLines>
          <TrayBtn $w={69} aria-label="通知"><svg width="24" height="24" viewBox="0 0 24 24"><path d="M0 0h24v18h-9l-4 5-4-5H0z" fill="#fff" /><path d="M5 5h14M5 9h14M5 13h9" stroke="#1d1c1c" strokeWidth="1.300" /></svg></TrayBtn>
          <DesktopEdge />
        </Tray>
      </TaskBar>

      <Dialog aria-label="函数参数">
        <DialogHead>
          <DialogTitle>函数参数</DialogTitle>
          <DialogBtn $gap={57} aria-label="帮助">?</DialogBtn>
          <DialogBtn aria-label="关闭"><svg width="16" height="16" viewBox="0 0 16 16" stroke="#111" strokeWidth="1.200"><path d="M0 0l16 16M16 0L0 16" /></svg></DialogBtn>
        </DialogHead>
        <DialogRow>
          <Entry><input aria-label="参数" defaultValue="学生表!A1:B49" /><Caret /></Entry>
          <RangeBtn aria-label="展开对话框"><svg width="15" height="23" viewBox="0 0 15 23"><path d="M.500.500h14v22H.500z" fill="#fff" stroke="#777" strokeWidth="1.500" /><path d="M0 5h15v3H0zM0 20h15v3H0z" fill="#777" /><path d="M6 8.500h3v3h3v4l-4.500 3.500L3 15.500v-4h3z" fill="#3578c2" /></svg></RangeBtn>
        </DialogRow>
      </Dialog>

      <ImeBar>
        <ImeLogo><Sogou size={48} /></ImeLogo>
        <ImePanel>
          <ImeBtn>英</ImeBtn>
          <ImeBtn aria-label="标点"><svg width="20" height="22" viewBox="0 0 20 22" fill="currentColor"><circle cx="4" cy="6" r="3" /><path d="M12 11q5-2 5 3 0 5-5 7 2-4 2-5-3-1-2-5z" /></svg></ImeBtn>
          <ImeBtn aria-label="翻译"><svg width="24" height="24" viewBox="0 0 24 24" fill="currentColor"><rect x="1" y="1" width="12" height="13" rx="3" /><rect x="10" y="10" width="13" height="13" rx="3" /><path d="M4 11l3-7 3 7M5 9h4M12.500 14.500h8v4h-8zM16.500 12v9" fill="none" stroke="#fff" strokeWidth="1.500" /><path d="M15 2q3 1 3 5M19 2q3 2 3 6M2 17q0 5 6 6" fill="none" stroke="currentColor" strokeWidth="2" /></svg></ImeBtn>
          <ImeBtn aria-label="截图"><svg width="24" height="22" viewBox="0 0 24 22" fill="none" stroke="currentColor" strokeWidth="2.400"><circle cx="5.500" cy="16.500" r="4" /><circle cx="18.500" cy="16.500" r="4" /><path d="M6 1l10 12M18 1L8 13" /></svg></ImeBtn>
          <ImeBtn aria-label="工具箱"><svg width="20" height="20" viewBox="0 0 20 20" fill="currentColor"><rect width="9" height="9" rx="2" /><rect y="11" width="9" height="9" rx="2.500" /><rect x="11" y="11" width="9" height="9" rx="2.500" /><rect x="12.200" y="1.200" width="6.600" height="6.600" rx="1.500" fill="none" stroke="currentColor" strokeWidth="2.400" /></svg></ImeBtn>
        </ImePanel>
      </ImeBar>

      <Ink width="1920" height="1080" viewBox="0 0 1920 1080">
        <defs>
          <linearGradient id="fade" gradientUnits="userSpaceOnUse" x1="262" y1="0" x2="1703" y2="0">
            <stop offset="0" stopColor="#f7e96b" stopOpacity=".15" /><stop offset=".55" stopColor="#f7e550" stopOpacity=".34" />
            <stop offset=".94" stopColor="#f8e03c" stopOpacity=".55" /><stop offset="1" stopColor="#f5dc20" stopOpacity=".95" />
          </linearGradient>
        </defs>
        <circle cx="1703" cy="378" r="44.500" fill="none" stroke="#ff9a62" strokeOpacity=".68" strokeWidth="7" />
        <path d={trail} fill="url(#fade)" />
        <path d="M1703.500 378.500v23.500l5.500-5 4 8 4-2-3.500-7.500h7.500z" fill="#fff" stroke="#111" strokeWidth="1.200" />
      </Ink>
    </App_>
  );
}
